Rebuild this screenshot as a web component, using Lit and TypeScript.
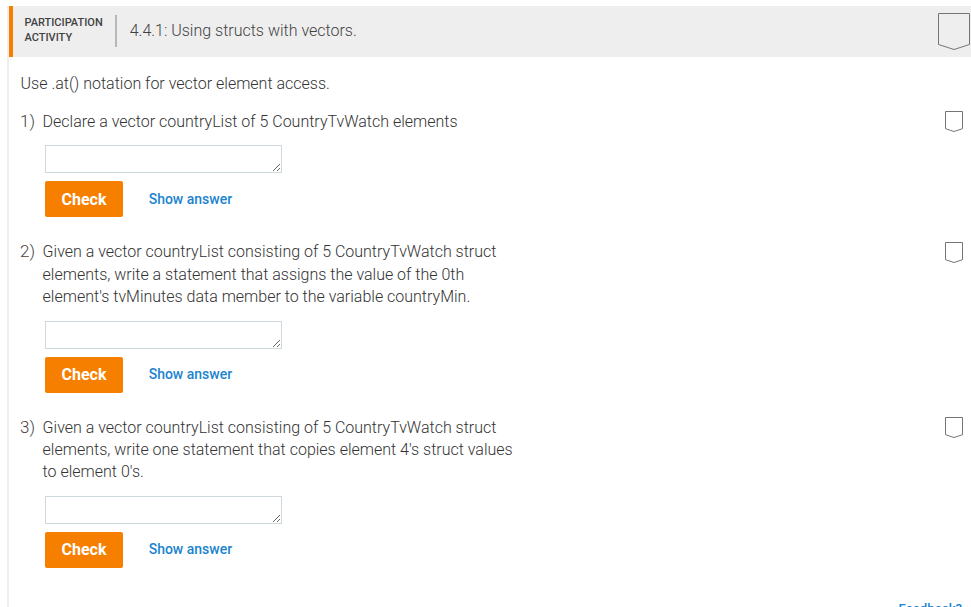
import { LitElement, html, css, svg } from "lit";
import { customElement } from "lit/decorators.js";

const bigShield = html`<svg class="big" viewBox="0 0 32 37" aria-hidden="true">
  ${svg`<path d="M.5.5h31v31L16 36.5.5 31.5z" fill="none" stroke="#757575" stroke-width="1"/>`}
</svg>`;
const smallShield = html`<svg class="small" viewBox="0 0 18 21" aria-hidden="true">
  ${svg`<path d="M.5.5h17v17.2L9 20.5.5 17.7z" fill="none" stroke="#757575" stroke-width="1"/>`}
</svg>`;

const questions = [
  ["Declare a vector countryList of 5 CountryTvWatch elements"],
  ["Given a vector countryList consisting of 5 CountryTvWatch struct", "elements, write a statement that assigns the value of the 0th", "element's tvMinutes data member to the variable countryMin."],
  ["Given a vector countryList consisting of 5 CountryTvWatch struct", "elements, write one statement that copies element 4's struct values", "to element 0's."],
];

@customElement("app-root")
export class AppRoot extends LitElement {
  static styles = css`
    :host { display: block; height: 607px; overflow: hidden; font-family: Roboto, sans-serif; font-weight: 300; font-size: 16px; color: #333; background: #fff; }
    .activity { margin: 6px 0 0 7px; border-left: 2px solid #eee; }
    .header { height: 51px; box-sizing: border-box; background: #eee; border-left: 4px solid #f77f00; display: flex; align-items: center; padding: 0 1px 0 11.5px; }
    .label { font-size: 11px; font-weight: 500; line-height: 15px; color: #424242; width: 90.5px; padding-bottom: 3px; }
    .title { border-left: 2px solid #b8b8b8; height: 32px; line-height: 32px; padding-left: 12.7px; flex: 1; font-size: 16px; color: #424242; margin-top: -1px; }
    .big { width: 32px; height: 37px; flex: none; }
    .body { padding: 15px 0 0 11.6px; }
    .intro { line-height: 24px; }
    .q { display: flex; margin-top: 24.03px; padding-right: 8.4px; }
    .intro + .q { margin-top: 14.8px; }
    .num { width: 22px; flex: none; font-size: 17px; line-height: 21.4px; color: #444; margin-left: -0.5px; padding-right: 0.5px; }
    .main { flex: 1; min-width: 0; }
    .text { line-height: 22.4px; }
    .line { display: block; white-space: nowrap; }
    .small { width: 18px; height: 21px; flex: none; margin-top: 0.3px; }
    .answer { margin: 12.1px 0 0 2.4px; }
    textarea { display: block; width: 237px; height: 28px; box-sizing: border-box; border: 1px solid #cfd8dc; margin: 0; padding: 0; background: #fff; outline: none; }
    .actions { display: flex; align-items: center; margin-top: 8px; }
    button { width: 78px; height: 36px; border: 0; border-radius: 2px; background: #f77f00; color: #fff; font: 700 16px Roboto, sans-serif; padding: 0; }
    .show { margin-left: 25.7px; padding-bottom: 1px; color: #1c83cf; font-size: 14px; font-weight: 500; }
    .feedback { text-align: right; margin-top: 32.8px; padding-right: 9px; color: #1c83cf; font-size: 13.2px; font-weight: 500; line-height: 16px; }
  `;
  render() {
    return html`<div class="activity">
      <div class="header">
        <div class="label">PARTICIPATION<br />ACTIVITY</div>
        <div class="title">4.4.1: Using structs with vectors.</div>
        ${bigShield}
      </div>
      <div class="body">
        <div class="intro">Use .at() notation for vector element access.</div>
        ${questions.map((lines, i) => html`<div class="q">
          <div class="num">${i + 1})</div>
          <div class="main">
            <div class="text">${lines.map((l) => html`<span class="line">${l}</span>`)}</div>
            <div class="answer">
              <textarea aria-label="Answer"></textarea>
              <div class="actions"><button>Check</button><span class="show">Show answer</span></div>
            </div>
          </div>
          ${smallShield}
        </div>`)}
        <div class="feedback">Feedback?</div>
      </div>
    </div>`;
  }
}
